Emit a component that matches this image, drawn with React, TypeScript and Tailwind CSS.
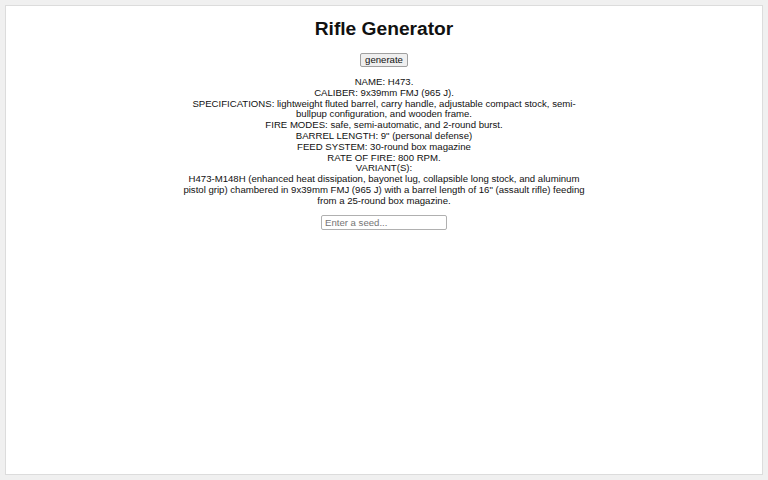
import { useState } from 'react';

const lines = [
  'NAME: H473.',
  'CALIBER: 9x39mm FMJ (965 J).',
  'SPECIFICATIONS: lightweight fluted barrel, carry handle, adjustable compact stock, semi-bullpup configuration, and wooden frame.',
  'FIRE MODES: safe, semi-automatic, and 2-round burst.',
  'BARREL LENGTH: 9" (personal defense)',
  'FEED SYSTEM: 30-round box magazine',
  'RATE OF FIRE: 800 RPM.',
  'VARIANT(S):',
  'H473-M148H (enhanced heat dissipation, bayonet lug, collapsible long stock, and aluminum pistol grip) chambered in 9x39mm FMJ (965 J) with a barrel length of 16" (assault rifle) feeding from a 25-round box magazine.',
];

export default function App() {
  const [seed, setSeed] = useState('');

  return (
    <div className="w-full h-[480px] bg-[#f0f0f0] p-[5px] font-['Liberation_Sans',Arial,sans-serif]">
      <div className="h-full bg-white border border-[#dcdcdc] flex flex-col items-center text-[#111]">
        <h1 className="mt-[11px] text-[19.2px] font-bold leading-[23px]">Rifle Generator</h1>

        <button className="mt-[13px] px-[4px] h-[14px] text-[9.6px] leading-[12px] bg-[#efefef] border border-[#a0a0a0] rounded-[2px]">
          generate
        </button>

        {/* Rifle stats */}
        <div className="mt-[10px] w-[406px] text-center text-[9.6px] leading-[10.8px]">
          {lines.map((l, i) => (
            <p key={i}>{l}</p>
          ))}
        </div>

        <input
          type="text"
          value={seed}
          onChange={e => setSeed(e.target.value)}
          placeholder="Enter a seed..."
          className="mt-[8px] w-[126px] h-[15px] px-[3px] text-[9.6px] border border-[#b0b0b0] rounded-[2px] placeholder-[#757575] outline-none"
        />
      </div>
    </div>
  );
}
